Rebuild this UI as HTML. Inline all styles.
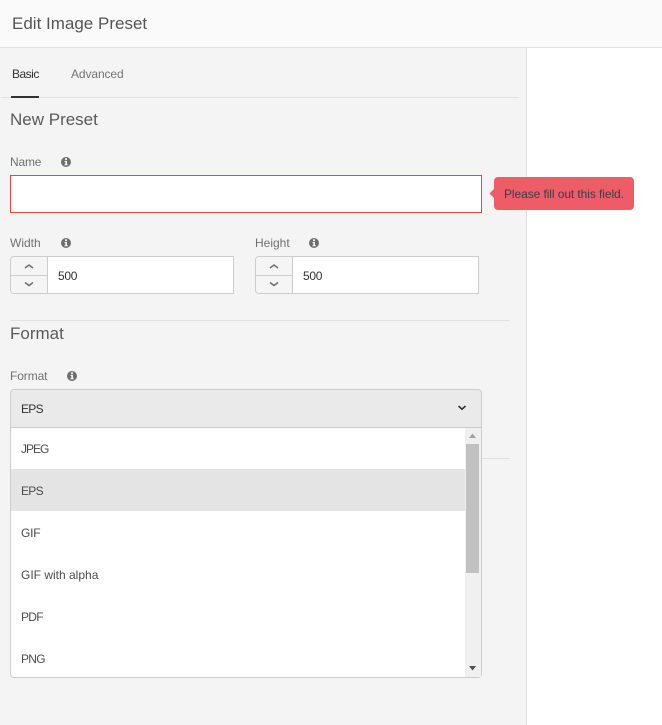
<!DOCTYPE html>
<html><head><meta charset="utf-8"><style>
html,body{margin:0;padding:0}
body{width:662px;height:725px;position:relative;overflow:hidden;background:#fff;font-family:"Liberation Sans",sans-serif;color:#323232}
.a{position:absolute;box-sizing:border-box}
.t{position:absolute;white-space:nowrap;line-height:16px;font-size:12px}
.lab{color:#707070}
.h{font-size:17px;line-height:22px;color:#5a5a5a}
.rule{position:absolute;height:1px;background:#e1e1e1}
.step{position:absolute;width:224px;height:38px;box-sizing:border-box;border:1px solid #cccccc;background:#fff;border-radius:4px 0 0 4px}
.step .b{position:absolute;left:0;top:0;width:36px;height:36px;background:#f5f5f5;border-right:1px solid #cccccc;border-radius:3px 0 0 3px}
.step .m{position:absolute;left:0;top:18px;width:36px;height:1px;background:#cccccc}
.step svg{position:absolute;left:0;top:0}
.opt{position:absolute;left:11px;width:454px;height:42px;line-height:44px;font-size:12px;padding-left:10px;box-sizing:border-box;color:#4b4b4b}
.caps{letter-spacing:-.7px}
</style></head><body>
<div class="a" style="left:0;top:0;width:662px;height:48px;background:#fafafa;border-bottom:1px solid #e1e1e1"></div>
<div class="a" style="left:0;top:48px;width:527px;height:677px;background:#f4f4f4;border-right:1px solid #dcdcdc"></div>
<div class="t" style="left:12px;top:13px;font-size:17px;line-height:22px;color:#555">Edit Image Preset</div>

<div class="t" style="left:12px;top:66px;color:#323232;letter-spacing:-.5px">Basic</div>
<div class="t" style="left:71px;top:66px;color:#757575;letter-spacing:-.1px">Advanced</div>
<div class="rule" style="left:1px;top:97px;width:518px"></div>
<div class="a" style="left:11px;top:96px;width:28px;height:2px;background:#323232"></div>

<div class="t h" style="left:10px;top:109px">New Preset</div>
<div class="t lab" style="left:10px;top:154px;letter-spacing:-.2px">Name</div>
<svg class="a" style="left:60px;top:156px" width="12" height="12" viewBox="0 0 12 12"><circle cx="6" cy="6" r="5" fill="#6e6e6e"/><rect x="5" y="2.3" width="2" height="1.8" fill="#f4f4f4"/><path d="M4.5 5h2.5v3.2h.8v1H4.4v-1h.9V6h-.8z" fill="#f4f4f4"/></svg>
<div class="a" style="left:10px;top:175px;width:472px;height:38px;background:#fff;border:1px solid #f5433a"></div>

<div class="a" style="left:494px;top:177px;width:140px;height:33px;background:#ee5c67;border-radius:4px"></div>
<div class="a" style="left:490.5px;top:190px;width:7px;height:7px;background:#ee5c67;transform:rotate(45deg)"></div>
<div class="t" style="left:504px;top:186px;color:#3c3c46;letter-spacing:-.08px">Please fill out this field.</div>

<div class="t lab" style="left:10px;top:235px">Width</div>
<svg class="a" style="left:60px;top:237px" width="12" height="12" viewBox="0 0 12 12"><circle cx="6" cy="6" r="5" fill="#6e6e6e"/><rect x="5" y="2.3" width="2" height="1.8" fill="#f4f4f4"/><path d="M4.5 5h2.5v3.2h.8v1H4.4v-1h.9V6h-.8z" fill="#f4f4f4"/></svg>
<div class="step" style="left:10px;top:256px"><div class="b"></div><div class="m"></div>
<svg width="37" height="36" viewBox="0 0 37 36"><path d="M14 11l4-3 4 3M14 25.5l4 3 4-3" fill="none" stroke="#6e6e6e" stroke-width="1.5"/></svg></div>
<div class="t" style="left:58px;top:268px;color:#323232;letter-spacing:-.3px">500</div>

<div class="t lab" style="left:255px;top:235px">Height</div>
<svg class="a" style="left:308px;top:237px" width="12" height="12" viewBox="0 0 12 12"><circle cx="6" cy="6" r="5" fill="#6e6e6e"/><rect x="5" y="2.3" width="2" height="1.8" fill="#f4f4f4"/><path d="M4.5 5h2.5v3.2h.8v1H4.4v-1h.9V6h-.8z" fill="#f4f4f4"/></svg>
<div class="step" style="left:255px;top:256px"><div class="b"></div><div class="m"></div>
<svg width="37" height="36" viewBox="0 0 37 36"><path d="M14 11l4-3 4 3M14 25.5l4 3 4-3" fill="none" stroke="#6e6e6e" stroke-width="1.5"/></svg></div>
<div class="t" style="left:303px;top:268px;color:#323232;letter-spacing:-.3px">500</div>

<div class="rule" style="left:10px;top:320px;width:500px"></div>
<div class="t h" style="left:10px;top:323px">Format</div>
<div class="t lab" style="left:10px;top:368px;letter-spacing:-.1px">Format</div>
<svg class="a" style="left:66px;top:370px" width="12" height="12" viewBox="0 0 12 12"><circle cx="6" cy="6" r="5" fill="#6e6e6e"/><rect x="5" y="2.3" width="2" height="1.8" fill="#f4f4f4"/><path d="M4.5 5h2.5v3.2h.8v1H4.4v-1h.9V6h-.8z" fill="#f4f4f4"/></svg>

<div class="rule" style="left:482px;top:458px;width:28px"></div>

<div class="a" style="left:10px;top:389px;width:472px;height:39px;background:#eaeaea;border:1px solid #cccccc;border-radius:4px 4px 0 0"></div>
<div class="t caps" style="left:21px;top:401px;color:#323232">EPS</div>
<svg class="a" style="left:457px;top:404px" width="10" height="8" viewBox="0 0 10 8"><path d="M1.5 2l3.5 3.2L8.5 2" fill="none" stroke="#323232" stroke-width="1.6"/></svg>

<div class="a" style="left:10px;top:427px;width:472px;height:251px;background:#fff;border:1px solid #cccccc;border-radius:0 0 4px 4px"></div>
<div class="a" style="left:465px;top:428px;width:16px;height:249px;background:#f0f0f0"></div>
<div class="a" style="left:466px;top:444px;width:13px;height:129px;background:#c1c1c1"></div>
<svg class="a" style="left:468px;top:432px" width="9" height="8" viewBox="0 0 9 8"><path d="M4.5 1.5L8 6H1z" fill="#a3a3a3"/></svg>
<svg class="a" style="left:468px;top:664px" width="9" height="8" viewBox="0 0 9 8"><path d="M1 2h7L4.5 6.5z" fill="#505050"/></svg>

<div class="opt" style="top:428px;height:41px;line-height:42px"><span class="caps" style="letter-spacing:-1px">JPEG</span></div>
<div class="opt" style="top:469px;background:#e4e4e4"><span class="caps">EPS</span></div>
<div class="opt" style="top:511px"><span style="letter-spacing:-.2px">GIF</span></div>
<div class="opt" style="top:553px">GIF with alpha</div>
<div class="opt" style="top:595px"><span class="caps">PDF</span></div>
<div class="opt" style="top:637px"><span class="caps">PNG</span></div>
</body></html>
